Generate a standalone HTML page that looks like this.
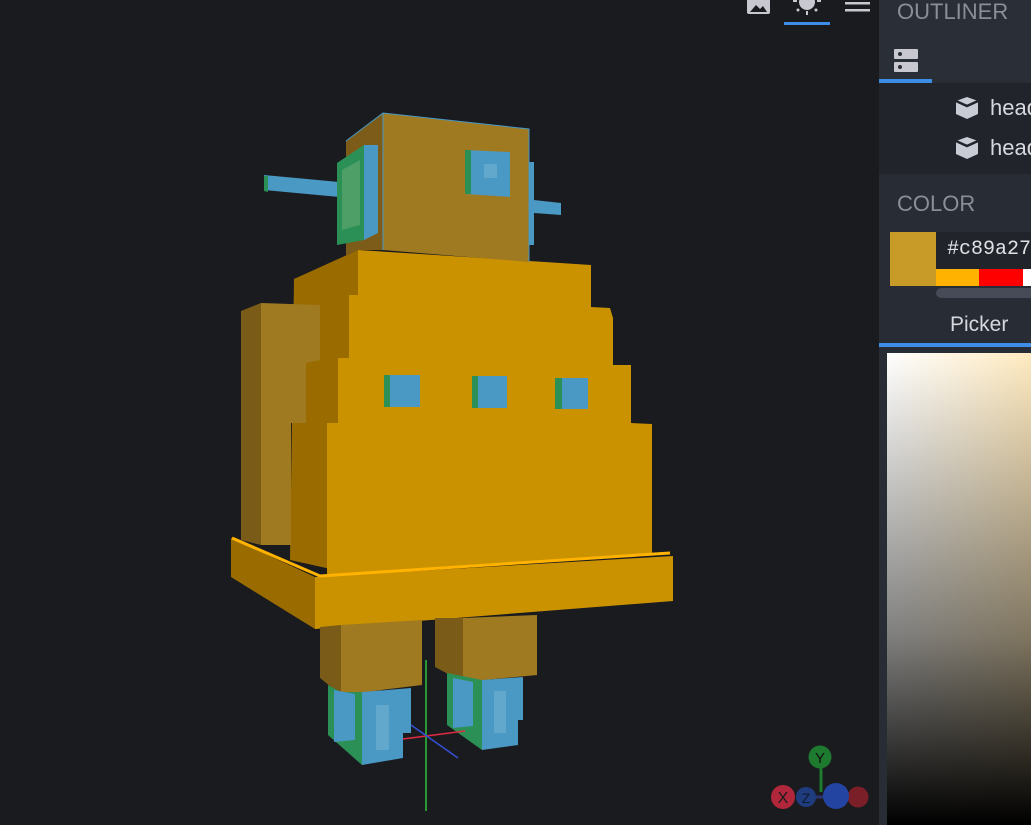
<!DOCTYPE html>
<html><head><meta charset="utf-8"><style>
body{margin:0;width:1031px;height:825px;overflow:hidden;background:#1a1b1f;font-family:"Liberation Sans","DejaVu Sans",sans-serif;position:relative}
.p{position:absolute}
</style></head><body>
<svg class="p" style="left:0;top:0" width="879" height="825">
<rect x="747" y="-4" width="23" height="18" rx="2" fill="#c8c8d0"/>
<path d="M750 12 L756 5 L760 9 L763 6 L767 12Z" fill="#1a1b1f"/>
<circle cx="807" cy="2" r="8" fill="#c8c8d0"/>
<rect x="793" y="0" width="4" height="2" fill="#c8c8d0"/><rect x="817" y="0" width="4" height="2" fill="#c8c8d0"/>
<rect x="806" y="11" width="2" height="4" fill="#c8c8d0"/><circle cx="798" cy="10" r="1.5" fill="#c8c8d0"/><circle cx="816" cy="10" r="1.5" fill="#c8c8d0"/>
<rect x="784" y="22" width="46" height="3" fill="#3e8ee8"/>
<rect x="845" y="2" width="25" height="2.5" fill="#c8c8d0"/><rect x="845" y="9" width="25" height="2.5" fill="#c8c8d0"/>
<polygon points="294,279 358,250 358,575 290,560" fill="#9a6c00"/>
<polygon points="241,311 261,303 261,545 241,540" fill="#7a5b18"/>
<polygon points="261,303 320,305 320,360 306,363 306,423 291,423 291,545 261,545" fill="#a07a20"/>
<polygon points="358,250 591,265 591,307 610,308 613,318 613,365 631,365 631,423 652,424 652,555 327,575 327,423 338,423 338,358 349,358 349,295 358,295" fill="#cb9200"/>
<polygon points="346,141 383,113 383,250 358,250 346,256" fill="#7d5c19"/>
<polygon points="383,113 529,129 529,262 383,250" fill="#a07a20"/>
<polyline points="346,141 383,113 529,129 529,262" fill="none" stroke="#4a98c4" stroke-width="1"/>
<line x1="383" y1="113" x2="383" y2="250" stroke="#4a98c4" stroke-width="1"/>
<polygon points="264,175 350,183 350,198 264,190" fill="#4a98c4"/>
<polygon points="264,176 268,176 268,192 264,191" fill="#2a9055"/>
<polygon points="337,163 364,145 364,240 337,245" fill="#2a9055"/>
<polygon points="342,170 360,160 360,225 342,230" fill="#4e9e68"/>
<polygon points="364,145 378,145 378,233 364,240" fill="#4a98c4"/>
<polygon points="465,150 510,152 510,197 465,194" fill="#4a98c4"/>
<rect x="465" y="150" width="6" height="44" fill="#2a9055"/>
<rect x="484" y="164" width="13" height="14" fill="#62a8cc"/>
<rect x="529" y="162" width="5" height="83" fill="#4a98c4"/>
<polygon points="534,200 561,203 561,215 534,213" fill="#4a98c4"/>
<rect x="384" y="375" width="36" height="32" fill="#4a98c4"/><rect x="384" y="375" width="6" height="32" fill="#2a9055"/>
<rect x="472" y="376" width="35" height="32" fill="#4a98c4"/><rect x="472" y="376" width="6" height="32" fill="#2a9055"/>
<rect x="555" y="378" width="33" height="31" fill="#4a98c4"/><rect x="555" y="378" width="7" height="31" fill="#2a9055"/>
<polygon points="231,538 315,577 315,629 231,577" fill="#9a6c00"/>
<polygon points="315,577 673,556 673,601 315,629" fill="#cb9200"/>
<polyline points="232,538 320,576 670,553" fill="none" stroke="#ffb300" stroke-width="3"/>
<polygon points="320,627 341,625 341,695 320,678" fill="#7a5b18"/>
<polygon points="341,625 422,620 422,685 341,695" fill="#a07a20"/>
<polygon points="435,618 463,618 463,682 435,667" fill="#7a5b18"/>
<polygon points="463,618 537,615 537,675 463,682" fill="#a07a20"/>
<polygon points="328,685 341,692 362,692 362,765 328,735" fill="#2a9055"/>
<polygon points="334,690 355,694 355,740 334,742" fill="#4a98c4"/>
<polygon points="362,692 411,688 411,733 403,733 403,758 362,765" fill="#4a98c4"/>
<rect x="376" y="705" width="13" height="45" fill="#62a8cc"/>
<polygon points="447,673 482,680 482,750 447,725" fill="#2a9055"/>
<polygon points="453,678 473,682 473,726 453,728" fill="#4a98c4"/>
<polygon points="482,680 523,677 523,720 518,720 518,745 482,750" fill="#4a98c4"/>
<rect x="494" y="691" width="12" height="42" fill="#62a8cc"/>
<line x1="426" y1="660" x2="426" y2="811" stroke="#2ec33c" stroke-width="1.5"/>
<line x1="403" y1="739" x2="465" y2="731" stroke="#e02a40" stroke-width="1.5"/>
<line x1="411" y1="725" x2="458" y2="758" stroke="#3550d8" stroke-width="1.5"/>
<line x1="821" y1="760" x2="821" y2="792" stroke="#1e7a2e" stroke-width="3"/>
<line x1="806" y1="797" x2="836" y2="797" stroke="#2a3470" stroke-width="3"/>
<circle cx="858" cy="797" r="10.5" fill="#7a1e28"/>
<circle cx="836" cy="796" r="13" fill="#2344a0"/>
<circle cx="806" cy="797" r="10" fill="#1f3c7e"/>
<circle cx="783" cy="797" r="12" fill="#b0263a"/>
<circle cx="820" cy="757" r="11.5" fill="#1e7a2e"/>
<text x="783" y="803" font-size="16" fill="#1a1b1f" text-anchor="middle">X</text>
<text x="806" y="803" font-size="14" fill="#111a30" text-anchor="middle">Z</text>
<text x="820" y="763" font-size="15" fill="#111" text-anchor="middle">Y</text>
</svg>
<div class="p" style="left:879px;top:0;width:152px;height:825px;background:#282c34"></div>
<div class="p" style="left:879px;top:0;width:152px;height:82px;background:#2a2e37"></div>
<div class="p" style="left:897px;top:0;font-size:22px;color:#8a8e96;line-height:24px">OUTLINER</div>
<div class="p" style="left:894px;top:49px;width:24px;height:10px;background:#c8c8d0;border-radius:1px"></div>
<div class="p" style="left:894px;top:62px;width:24px;height:10px;background:#c8c8d0;border-radius:1px"></div>
<div class="p" style="left:898px;top:52px;width:4px;height:4px;background:#2a2e37;border-radius:50%"></div>
<div class="p" style="left:898px;top:65px;width:4px;height:4px;background:#2a2e37;border-radius:50%"></div>
<div class="p" style="left:879px;top:79px;width:53px;height:4px;background:#3e8ee8"></div>
<div class="p" style="left:879px;top:83px;width:152px;height:91px;background:#21252b"></div>
<svg class="p" style="left:955px;top:96px" width="26" height="64">
<polygon points="12,1 23,5 23,18 12,23 1,18 1,5" fill="#c8ccd4"/><polyline points="1,5 12,10 23,5 M12,10 12,23" fill="none" stroke="#21252b" stroke-width="2.5"/>
<polygon points="12,41 23,45 23,58 12,63 1,58 1,45" fill="#c8ccd4"/><polyline points="1,45 12,50 23,45 M12,50 12,63" fill="none" stroke="#21252b" stroke-width="2.5"/>
</svg>
<div class="p" style="left:990px;top:95px;font-size:22px;color:#d6d8de;line-height:26px">head</div>
<div class="p" style="left:990px;top:135px;font-size:22px;color:#d6d8de;line-height:26px">head</div>
<div class="p" style="left:897px;top:192px;font-size:22px;color:#8a8e96;line-height:24px">COLOR</div>
<div class="p" style="left:890px;top:232px;width:46px;height:54px;background:#c89a27"></div>
<div class="p" style="left:936px;top:232px;width:95px;height:37px;background:#21252b"></div>
<div class="p" style="left:947px;top:238px;font-family:'Liberation Mono',monospace;font-size:20px;color:#e0e2e6">#c89a27</div>
<div class="p" style="left:936px;top:269px;width:43px;height:17px;background:#ffb300"></div>
<div class="p" style="left:979px;top:269px;width:44px;height:17px;background:#ff0000"></div>
<div class="p" style="left:1023px;top:269px;width:8px;height:17px;background:#fff"></div>
<div class="p" style="left:936px;top:288px;width:100px;height:10px;background:#474b57;border-radius:5px"></div>
<div class="p" style="left:950px;top:313px;font-size:21px;color:#d6d8de">Picker</div>
<div class="p" style="left:879px;top:343px;width:152px;height:4px;background:#3e8ee8"></div>
<div class="p" style="left:887px;top:353px;width:144px;height:472px;background:linear-gradient(to bottom,rgba(0,0,0,0),rgba(0,0,0,0.5) 60%,#000),linear-gradient(to right,#fff,#ffe0a0 150%)"></div>
</body></html>
